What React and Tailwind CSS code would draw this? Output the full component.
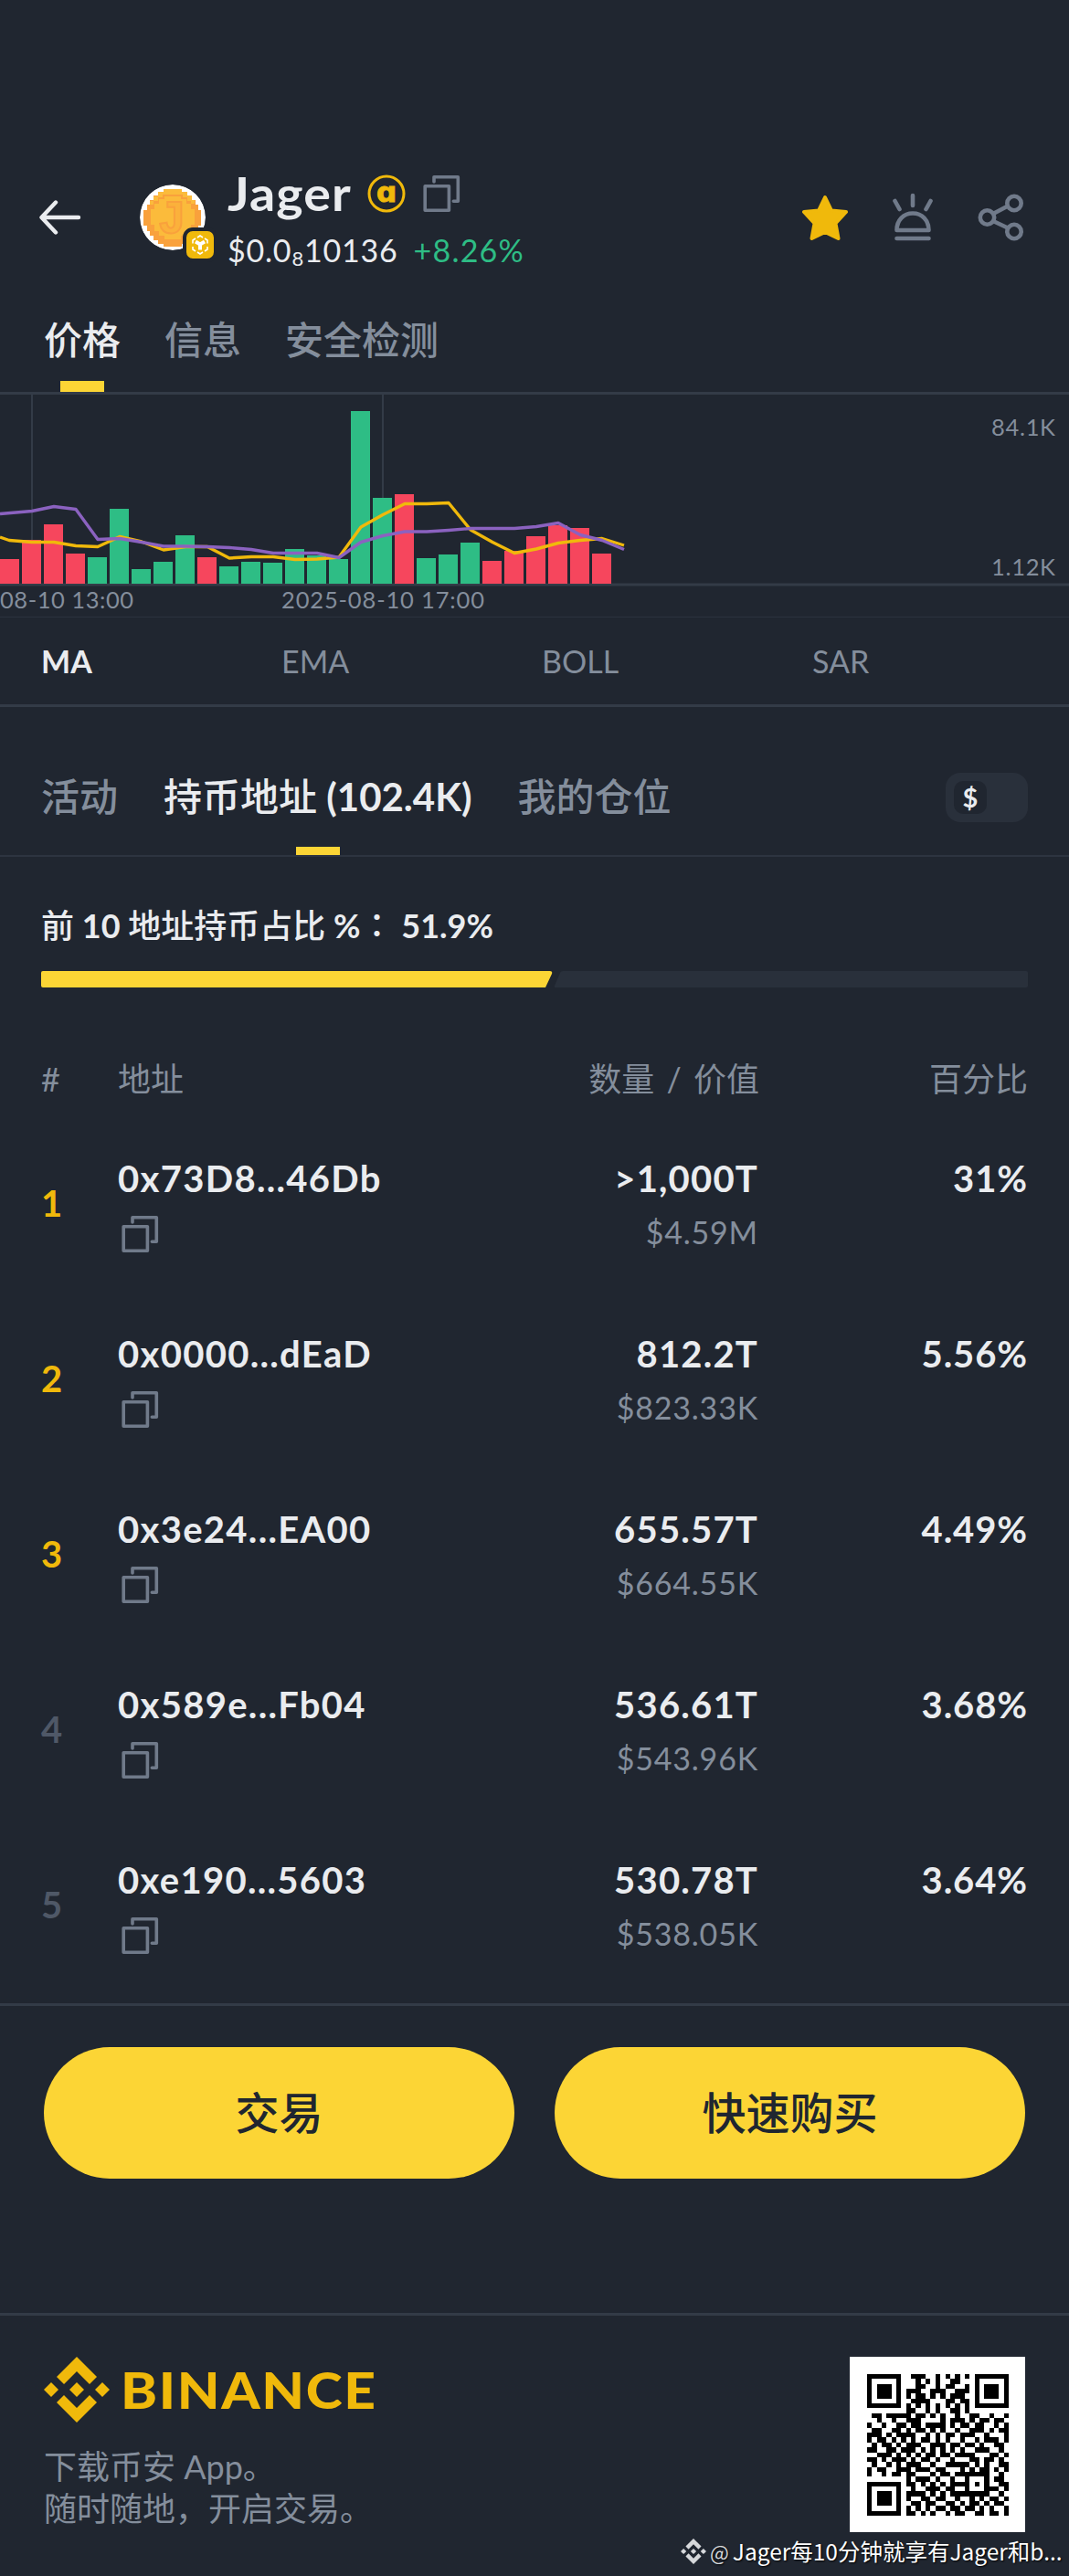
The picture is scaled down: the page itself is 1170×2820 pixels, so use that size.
import React, { useState } from 'react';

const holders = [
  { rank: 1, address: '0x73D8...46Db', amount: '>1,000T', value: '$4.59M', percent: '31%' },
  { rank: 2, address: '0x0000...dEaD', amount: '812.2T', value: '$823.33K', percent: '5.56%' },
  { rank: 3, address: '0x3e24...EA00', amount: '655.57T', value: '$664.55K', percent: '4.49%' },
  { rank: 4, address: '0x589e...Fb04', amount: '536.61T', value: '$543.96K', percent: '3.68%' },
  { rank: 5, address: '0xe190...5603', amount: '530.78T', value: '$538.05K', percent: '3.64%' },
];

// [height, isUp]
const volumes = [
  [27, 0], [48, 0], [65, 0], [33, 0], [29, 1], [82, 1], [16, 1], [24, 1], [53, 1], [29, 0],
  [19, 1], [24, 1], [23, 1], [38, 1], [31, 1], [27, 1], [189, 1], [94, 1], [98, 0], [28, 1],
  [32, 1], [45, 1], [25, 0], [36, 0], [52, 0], [64, 0], [61, 0], [33, 0],
];

const maFast = '0,156 10,159.5 35,161.5 59,161.5 83,165.5 107,166.5 131,155.5 155,161 179,170 203,166.5 227,166.5 251,179 275,177.5 299,177.5 323,180.5 347,180 371,178 395,145 419,131.5 443,119.5 467,119.5 491,118.5 515,148 539,161.5 563,173.5 587,169 611,162.5 635,159.5 659,157.5 683,165';
const maSlow = '0,130.5 35,127.5 59,122.5 83,125.5 107,158.5 131,157.5 155,161.5 179,166 203,166 227,166.5 251,167.5 275,169.5 299,173.5 323,173.5 347,173.5 371,178.5 395,161.5 419,154.5 443,150 467,150 491,148.5 515,146.5 539,146.5 563,146.5 587,144.5 611,140.5 635,153.5 659,159.5 683,169.5';

const qrRows = [
  '11111110011100101010101111111',
  '10000010001010100110001000001',
  '10111010001100101100101011101',
  '10111010111001110011101011101',
  '10111010101101010111001011101',
  '10000010011110001101101000001',
  '11111110101010101010101111111',
  '00000000110010100110100000000',
  '01101111101101010010011001001',
  '00100100111000010111010110110',
  '10010011011011110101101100101',
  '01100110101101010010011101011',
  '11101011110010101101110010001',
  '10110101010110101001001011101',
  '01011010111001110110110100110',
  '11001101110101010101001110010',
  '00111010101011011011110001101',
  '11010111010110100100011011010',
  '01001010111001001111101010011',
  '10110011101110110001010110101',
  '10010110110001011011111110010',
  '00000000101110100100100010110',
  '11111110110101010111101010011',
  '10000010010011101100100011101',
  '10111010111101010111111110010',
  '10111010100110110010010101101',
  '10111010011011001101011010110',
  '10000010101010110110110101001',
  '11111110110101001011001101101',
];

const CopyIcon = () => (
  <svg width="42" height="42" viewBox="0 0 42 42" fill="none" stroke="#707a8a" strokeWidth="3.6" strokeLinejoin="round" strokeLinecap="round">
    <path d="M2.200 12.700h26.200v26.600H2.200z" />
    <path d="M12 8V2.700h26.300v26.600h-5" />
  </svg>
);

const BinanceMark = ({ size, color }) => (
  <svg width={size} height={size} viewBox="0 0 72 72" fill={color}>
    <path d="M36 0 58 22 50 30 36 16 22 30 14 22Z" />
    <path d="M36 72 58 50 50 42 36 56 22 42 14 50Z" />
    <path d="M36 28l8 8-8 8-8-8zM8 28l8 8-8 8-8-8zM64 28l8 8-8 8-8-8z" />
  </svg>
);

const Coin = () => (
  <div className="relative w-[72px] h-[72px] ml-[64px]">
    <svg width="72" height="72" viewBox="0 0 72 72" className="rounded-full">
      <circle cx="36" cy="36" r="36" fill="#fff" />
      <path fill="#f9a13c" d="M26 5h20v3h6v4h5v5h4v5h3v6h3v17h-3v6h-3v5h-4v5h-5v4h-6v3H26v-3h-6v-4h-5v-5h-4v-5H8v-6H4V28h4v-6h3v-5h4v-5h5V8h6z" />
      <path fill="#fbbb3b" d="M26 5h20v3h6v4h5v5h3v4h-4v-3h-4v-4h-5v-3H25v3h-5v4h-5v4h-4v-4h4v-5h5V8h6z" />
      <path fill="#fbbb3b" d="M27 13h18v3h6v5h5v6h4v17h-4v7h-5v5h-6v4H27v-4h-6v-5h-5v-7h-4V27h4v-6h5v-5h6z" />
      <text x="35" y="53" textAnchor="middle" fontSize="52" fontFamily="Liberation Mono" fontWeight="700" fill="#fbb13b" stroke="#f9a13c" strokeWidth="2">J</text>
    </svg>
    <div className="absolute left-[47px] top-[47px] w-[38px] h-[38px] rounded-[11px] border-4 border-[#202630] bg-[#f0b90b] flex items-center justify-center">
      <svg width="20" height="22" viewBox="0 0 20 22" fill="none" stroke="#fff" strokeWidth="1.600">
        <path d="M7 3l3-2 3 2M15 4l3 2v3.500M18 13v3l-3 2M13 19l-3 2-3-2M5 18l-3-2v-3M2 9.500V6l3-2" />
        <path d="M5 7.500l5 3 5-3M10 10.500v6" strokeWidth="4" />
      </svg>
    </div>
  </div>
);

const Header = () => (
  <header className="h-[342px] pt-[178px] flex justify-between">
    <div className="flex h-[120px] items-center pl-[43px]">
      <svg width="46" height="42" viewBox="0 0 46 42" fill="none" stroke="#eaecef" strokeWidth="4.4" strokeLinecap="round" strokeLinejoin="round">
        <path d="M43 21H3M18 4.500L2.500 21 18 37.500" />
      </svg>
      <Coin />
      <div className="pl-[24px] h-[120px]">
        <div className="flex items-center h-[68px]">
          <h1 className="w-[153px] text-[51px] leading-[68px] font-bold tracking-[1px] origin-left scale-x-[1.09]">Jager</h1>
          <svg width="42" height="42" viewBox="0 0 42 42">
            <circle cx="21" cy="21" r="19" fill="none" stroke="#f0b90b" strokeWidth="3" />
            <text x="21" y="29.500" textAnchor="middle" fontSize="31" fontFamily="DejaVu Sans" fontWeight="700" fill="#f0b90b" stroke="#f0b90b">ɑ</text>
          </svg>
          <div className="ml-[19px]"><CopyIcon /></div>
        </div>
        <div className="flex text-[34px] leading-[56px] h-[54px]">
          <span className="tracking-[0.8px]">$0.0<sub className="text-[22px] leading-none bottom-[-4px]">8</sub>10136</span>
          <span className="ml-[17px] text-[#2ebd85] tracking-[1.200px]">+8.26%</span>
        </div>
      </div>
    </div>
    <div className="flex h-[120px] items-center gap-[43px] pr-[48px]">
      <svg width="52" height="52" viewBox="0 0 52 52" fill="#f0b90b" stroke="#f0b90b" strokeWidth="4" strokeLinejoin="round">
        <path d="M25 4l7 14.500 16 1.500-11.500 12.500 3 16.500L25 42 10.500 49l3-16.500L2 20l16-1.500z" />
      </svg>
      <svg width="52" height="54" viewBox="0 0 52 54" fill="none" stroke="#707a8a" strokeWidth="4.600" strokeLinecap="round" strokeLinejoin="round">
        <path d="M26 3v11M6.500 9l5 9M45.500 9l-5 9" />
        <path d="M8.500 41c0-11 7.500-18.500 17.500-18.500s17.500 7.500 17.500 18.500z" />
        <path d="M8.500 50h35" />
      </svg>
      <svg width="54" height="54" viewBox="0 0 54 54" fill="none" stroke="#707a8a" strokeWidth="4.600">
        <circle cx="12.500" cy="27" r="7.700" />
        <circle cx="42" cy="11.500" r="7.700" />
        <circle cx="42" cy="42.500" r="7.700" />
        <path d="M19 23L36 14M19 31l17 8" />
      </svg>
    </div>
  </header>
);

const Chart = () => (
  <section className="h-[246px] overflow-hidden border-t-[3px] border-[#333b47]">
    <svg width="1170" height="240" viewBox="0 0 1170 240" className="block">
      <path d="M35 0v208M419 0v208" stroke="#333b47" strokeWidth="2" />
      <path d="M0 208h1170" stroke="#333b47" strokeWidth="3" />
      {volumes.map(([h, up], i) => (
        <rect key={i} x={i * 24} y={207 - h} width="21" height={h} fill={up ? '#2ebd85' : '#f6465d'} />
      ))}
      <g fill="none" strokeWidth="3.4" strokeLinejoin="round">
        <polyline points={maFast} stroke="#f0b90b" />
        <polyline points={maSlow} stroke="#8b62c0" />
      </g>
      <g fill="#848e9c" fontSize="25.500">
        <text x="0" y="234" textLength="146">08-10 13:00</text>
        <text x="419" y="234" textAnchor="middle" textLength="222">2025-08-10 17:00</text>
        <text x="1155" y="45" textAnchor="end" textLength="70">84.1K</text>
        <text x="1155" y="198" textAnchor="end" textLength="70">1.12K</text>
      </g>
    </svg>
  </section>
);

const HolderRow = ({ holder }) => (
  <div className="flex h-[192px] px-[45px] pt-[21px]">
    <div className={`w-[84px] pt-[27px] text-[40px] leading-[60px] font-bold ${holder.rank <= 3 ? 'text-[#f0b90b]' : 'text-[#4f5867]'}`}>
      {holder.rank}
    </div>
    <div className="flex-1">
      <div className="text-[40px] leading-[60px] font-bold tracking-[1.300px]">{holder.address}</div>
      <div className="pl-[4px] pt-[10px]"><CopyIcon /></div>
    </div>
    <div className="text-right">
      <div className="text-[40px] leading-[60px] font-bold tracking-[1.200px]">{holder.amount}</div>
      <div className="text-[34px] leading-[58px] text-[#848e9c] tracking-[0.800px]">{holder.value}</div>
    </div>
    <div className="w-[295px] text-right text-[40px] leading-[60px] font-bold tracking-[0.900px]">{holder.percent}</div>
  </div>
);

const QrCode = () => (
  <div className="w-[192px] h-[192px] bg-white flex items-center justify-center">
    <svg width="155" height="155" viewBox="0 0 29 29" shapeRendering="crispEdges">
      {qrRows.map((row, y) =>
        row.split('').map((cell, x) => (cell === '1' ? <rect key={`${x}-${y}`} x={x} y={y} width="1" height="1" /> : null))
      )}
    </svg>
  </div>
);

const App = () => {
  const [tab, setTab] = useState('价格');
  const [indicator, setIndicator] = useState('MA');

  return (
    <div className="w-[1170px] h-[2820px] overflow-hidden bg-[#202630] text-[#eaecef] flex flex-col font-['Lato','Noto_Sans_CJK_SC',sans-serif]">
      <Header />

      <nav className="flex h-[87px] gap-[48px] px-[48px] text-[42px] leading-[60px] font-medium">
        {['价格', '信息', '安全检测'].map((name) => (
          <button key={name} onClick={() => setTab(name)} className={`flex flex-col items-center justify-between ${tab === name ? 'text-[#eaecef]' : 'text-[#848e9c]'}`}>
            <span>{name}</span>
            {tab === name && <span className="w-[48px] h-[12px] bg-[#fcd535]" />}
          </button>
        ))}
      </nav>

      <Chart />

      <div className="flex h-[99px] border-t border-b-[3px] border-t-[#2b323e] border-b-[#333b47] px-[45px] text-[34px] leading-[93px]">
        {['MA', 'EMA', 'BOLL', 'SAR'].map((name) => (
          <button key={name} onClick={() => setIndicator(name)} className={`text-left first:w-[263px] nth-2:w-[285px] nth-3:w-[296px] ${indicator === name ? 'font-bold' : 'text-[#848e9c]'}`}>
            {name}
          </button>
        ))}
      </div>

      <div className="flex justify-between h-[164px] pl-[45px] pr-[45px] pt-[66px] border-b-2 border-[#2d3440]">
        <div className="flex gap-[50px] text-[42px] leading-[64px] font-medium text-[#848e9c]">
          <span>活动</span>
          <div className="flex flex-col items-center justify-between text-[#eaecef]">
            <span className="whitespace-pre">持币地址<span className="font-bold"> (102.4K)</span></span>
            <span className="w-[48px] h-[9px] bg-[#fcd535]" />
          </div>
          <span>我的仓位</span>
        </div>
        <div className="w-[90px] h-[54px] mt-[6px] rounded-[16px] bg-[#29303b] p-[9px]">
          <div className="w-[36px] h-[36px] rounded-[10px] bg-[#202630] text-[29px] leading-[36px] text-center font-bold">$</div>
        </div>
      </div>

      <section className="h-[192px] px-[45px] pt-[45px]">
        <div className="text-[36px] leading-[60px] font-medium whitespace-pre">
          前<span className="font-bold"> 10 </span>地址持币占比<span className="font-bold"> %</span>
          <span className="font-['Noto_Sans_CJK_JP'] leading-none">：</span>
          <span className="font-bold"> 51.9%</span>
        </div>
        <svg width="1080" height="18" viewBox="0 0 1080 18" className="mt-[20px]">
          <path d="M2 0h555q3 0 2 3l-7 15H2q-2 0-2-2V2q0-2 2-2z" fill="#fcd535" />
          <path d="M571 0h507q2 0 2 2v14q0 2-2 2H563q-2 0-1-2l6-14q1-2 3-2z" fill="#29303b" />
        </svg>
      </section>

      <div className="flex h-[109px] px-[45px] pt-[21px] text-[36px] leading-[60px] text-[#848e9c]">
        <div className="w-[84px]">#</div>
        <div className="flex-1">地址</div>
        <div className="whitespace-pre [word-spacing:4px]">数量 / 价值</div>
        <div className="w-[294px] text-right">百分比</div>
      </div>

      <div className="h-[954px]">
        {holders.map((h) => <HolderRow key={h.rank} holder={h} />)}
      </div>

      <div className="flex h-[339px] gap-[44px] border-t-[3px] border-[#333b47] px-[48px] pt-[45px] text-[#202630] text-[48px] font-medium">
        <button className="flex-1 h-[144px] rounded-full bg-[#fcd535]">交易</button>
        <button className="flex-1 h-[144px] rounded-full bg-[#fcd535]">快速购买</button>
      </div>

      <footer className="relative flex justify-between h-[288px] border-t-[3px] border-[#333b47] px-[48px] pt-[45px]">
        <div>
          <div className="flex items-center h-[72px]">
            <BinanceMark size={72} color="#f0b90b" />
            <span className="ml-[12px] text-[55px] leading-[72px] font-black tracking-[1.500px] origin-left scale-x-[1.1] text-[#f0b90b]">BINANCE</span>
          </div>
          <p className="mt-[25px] text-[36px] leading-[46px] text-[#848e9c]">下载币安 App。<br />随时随地，开启交易。</p>
        </div>
        <QrCode />
        <div className="absolute left-[745px] top-[240px] flex items-center h-[36px] text-[24.500px] leading-[36px] text-white whitespace-nowrap font-['Noto_Sans_CJK_SC'] [text-shadow:1px_1px_2px_#000]">
          <BinanceMark size={28} color="#d6d8db" />
          <span className="ml-[4px] text-[22px] text-[#d6d8db]">@</span>
          <span className="ml-[4px]">Jager每10分钟就享有Jager和b...</span>
        </div>
      </footer>
    </div>
  );
};

export default App;
